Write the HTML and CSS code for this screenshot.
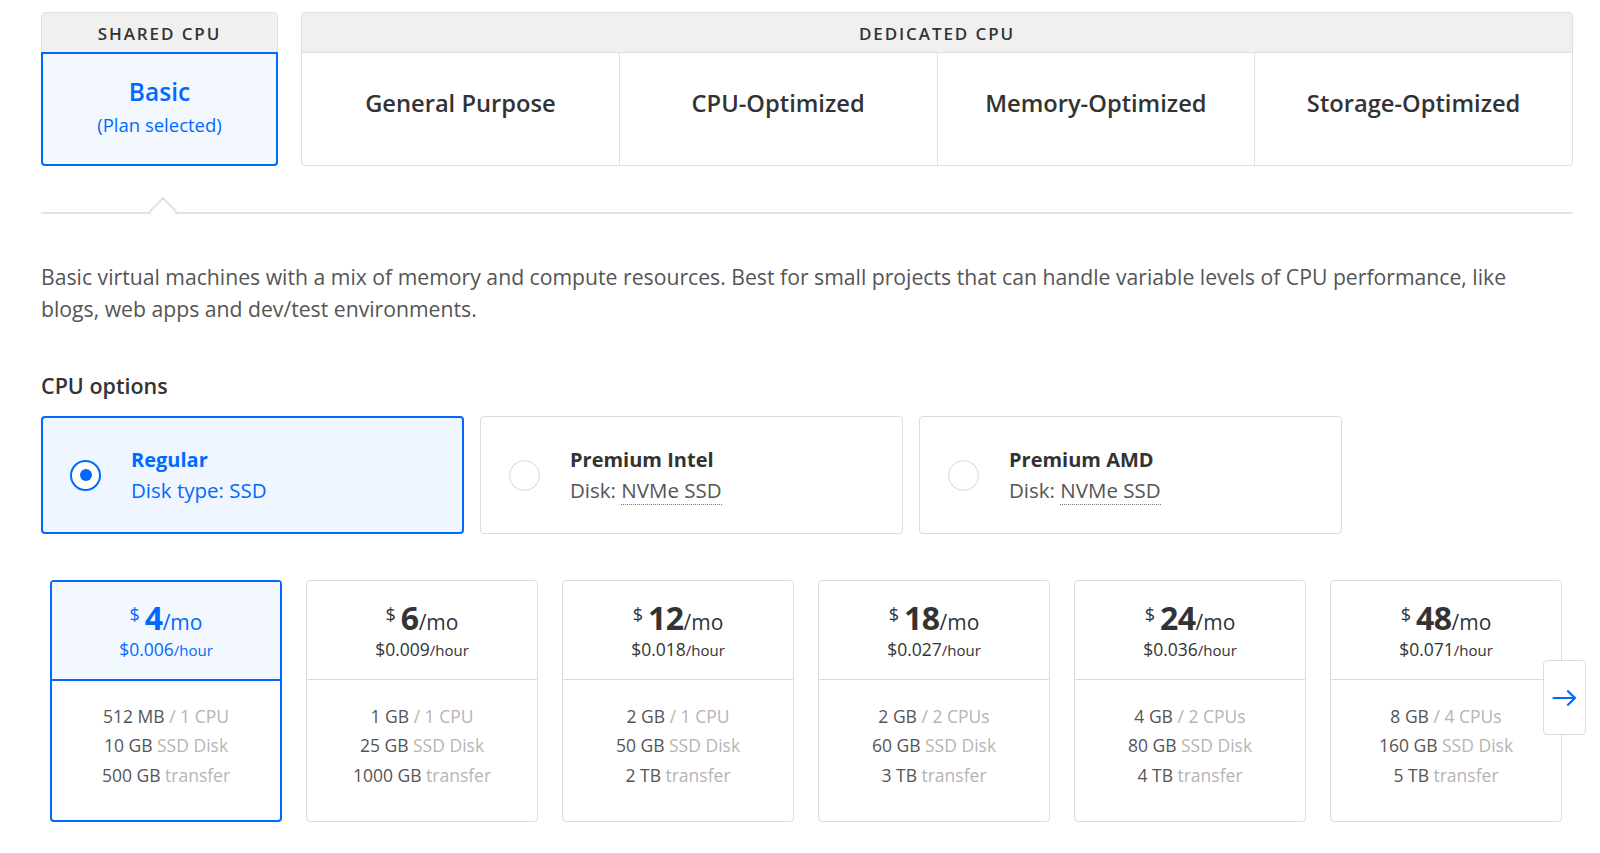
FILE: index.html
```html
<!DOCTYPE html>
<html>
<head>
<meta charset="utf-8">
<link rel="stylesheet" href="styles.css">
</head>
<body>
<div class="page">
  <div class="plan-row">
    <div class="group shared">
      <div class="group-head">SHARED CPU</div>
      <div class="group-body">
        <div class="plan selected">
          <div class="plan-name">Basic</div>
          <div class="plan-note">(Plan selected)</div>
        </div>
      </div>
    </div>
    <div class="group dedicated">
      <div class="group-head">DEDICATED CPU</div>
      <div class="group-body">
        <div class="plan"><div class="plan-name">General Purpose</div></div>
        <div class="plan"><div class="plan-name">CPU-Optimized</div></div>
        <div class="plan"><div class="plan-name">Memory-Optimized</div></div>
        <div class="plan"><div class="plan-name">Storage-Optimized</div></div>
      </div>
    </div>
  </div>

  <div class="divider"><span class="caret"></span></div>

  <p class="desc">Basic virtual machines with a mix of memory and compute resources. Best for small projects that can handle variable levels of CPU performance, like blogs, web apps and dev/test environments.</p>

  <h3 class="section-title">CPU options</h3>
  <div class="cpu-row">
    <div class="cpu-card active">
      <span class="radio on"></span>
      <div class="cpu-text">
        <div class="cpu-title">Regular</div>
        <div class="cpu-sub">Disk type: SSD</div>
      </div>
    </div>
    <div class="cpu-card">
      <span class="radio"></span>
      <div class="cpu-text">
        <div class="cpu-title">Premium Intel</div>
        <div class="cpu-sub">Disk: <span class="dotted">NVMe SSD</span></div>
      </div>
    </div>
    <div class="cpu-card">
      <span class="radio"></span>
      <div class="cpu-text">
        <div class="cpu-title">Premium AMD</div>
        <div class="cpu-sub">Disk: <span class="dotted">NVMe SSD</span></div>
      </div>
    </div>
  </div>

  <div class="slider">
    <div class="price-row">
      <div class="price-card active">
        <div class="price-head">
          <div class="monthly"><span class="cur">$</span><span class="amt">4</span><span class="per">/mo</span></div>
          <div class="hourly">$0.006<span class="per-h">/hour</span></div>
        </div>
        <div class="price-body">
          <div>512 MB <span class="lite">/ 1 CPU</span></div>
          <div>10 GB <span class="lite">SSD Disk</span></div>
          <div>500 GB <span class="lite">transfer</span></div>
        </div>
      </div>
      <div class="price-card">
        <div class="price-head">
          <div class="monthly"><span class="cur">$</span><span class="amt">6</span><span class="per">/mo</span></div>
          <div class="hourly">$0.009<span class="per-h">/hour</span></div>
        </div>
        <div class="price-body">
          <div>1 GB <span class="lite">/ 1 CPU</span></div>
          <div>25 GB <span class="lite">SSD Disk</span></div>
          <div>1000 GB <span class="lite">transfer</span></div>
        </div>
      </div>
      <div class="price-card">
        <div class="price-head">
          <div class="monthly"><span class="cur">$</span><span class="amt">12</span><span class="per">/mo</span></div>
          <div class="hourly">$0.018<span class="per-h">/hour</span></div>
        </div>
        <div class="price-body">
          <div>2 GB <span class="lite">/ 1 CPU</span></div>
          <div>50 GB <span class="lite">SSD Disk</span></div>
          <div>2 TB <span class="lite">transfer</span></div>
        </div>
      </div>
      <div class="price-card">
        <div class="price-head">
          <div class="monthly"><span class="cur">$</span><span class="amt">18</span><span class="per">/mo</span></div>
          <div class="hourly">$0.027<span class="per-h">/hour</span></div>
        </div>
        <div class="price-body">
          <div>2 GB <span class="lite">/ 2 CPUs</span></div>
          <div>60 GB <span class="lite">SSD Disk</span></div>
          <div>3 TB <span class="lite">transfer</span></div>
        </div>
      </div>
      <div class="price-card">
        <div class="price-head">
          <div class="monthly"><span class="cur">$</span><span class="amt">24</span><span class="per">/mo</span></div>
          <div class="hourly">$0.036<span class="per-h">/hour</span></div>
        </div>
        <div class="price-body">
          <div>4 GB <span class="lite">/ 2 CPUs</span></div>
          <div>80 GB <span class="lite">SSD Disk</span></div>
          <div>4 TB <span class="lite">transfer</span></div>
        </div>
      </div>
      <div class="price-card">
        <div class="price-head">
          <div class="monthly"><span class="cur">$</span><span class="amt">48</span><span class="per">/mo</span></div>
          <div class="hourly">$0.071<span class="per-h">/hour</span></div>
        </div>
        <div class="price-body">
          <div>8 GB <span class="lite">/ 4 CPUs</span></div>
          <div>160 GB <span class="lite">SSD Disk</span></div>
          <div>5 TB <span class="lite">transfer</span></div>
        </div>
      </div>
    </div>
    <button class="next" aria-label="Next">
      <svg width="25" height="16" viewBox="0 0 25 16"><path d="M1.5 8H23M16 1.2L23 8L16 14.8" fill="none" stroke="#0069ff" stroke-width="2.2" stroke-linecap="round" stroke-linejoin="round"/></svg>
    </button>
  </div>
</div>
</body>
</html>
```

FILE: styles.css
```css
* { box-sizing: border-box; }
html, body { margin: 0; padding: 0; background: #fff; }
body {
  font-family: "Open Sans", "Noto Sans", "Liberation Sans", sans-serif;
  color: #333;
}
.page { padding: 12px 0 0 41px; width: 1600px; }

.plan-row { display: flex; gap: 23px; width: 1532px; }
.group {
  border: 1px solid #dfdfdf;
  border-radius: 4px;
  background: #fff;
}
.shared { width: 237px; }
.dedicated { flex: 1; }
.group-head {
  height: 40px;
  background: #f0f0f0;
  border-bottom: 1px solid #dfdfdf;
  border-radius: 3px 3px 0 0;
  display: flex; align-items: center; justify-content: center;
  font-size: 17px; font-weight: 600; letter-spacing: 1.9px; color: #333;
  padding-top: 1px;
}
.group-body { display: flex; height: 112px; }
.plan {
  flex: 1;
  display: flex; flex-direction: column; align-items: center; justify-content: center;
  border-right: 1px solid #dfdfdf;
  padding-bottom: 12px;
}
.plan:last-child { border-right: 0; }
.plan-name { font-size: 23.7px; font-weight: 600; color: #333; line-height: 30px; }
.plan.selected {
  background: #f3f8ff;
  border: 2px solid #0069ff;
  margin: -1px -1px -1px -1px;
  border-radius: 0 0 4px 4px;
  padding-bottom: 4px;
}
.plan.selected .plan-name { color: #0069ff; font-size: 24.5px; }
.plan-note { font-size: 18.5px; color: #0069ff; line-height: 24px; margin-top: 6px; }

.divider {
  position: relative;
  margin-top: 46px;
  height: 2px;
  background: #e2e2e2;
  width: 1532px;
}
.caret {
  position: absolute;
  left: 112px; top: -11px;
  width: 20px; height: 20px;
  background: #fff;
  border-top: 2px solid #e2e2e2;
  border-left: 2px solid #e2e2e2;
  transform: rotate(45deg);
}

.desc {
  margin: 47px 0 0;
  font-size: 21.2px; line-height: 31.5px; color: #555;
  max-width: 1515px;
}
.section-title {
  margin: 48px 0 0;
  font-size: 21.5px; line-height: 28px; font-weight: 600; color: #333;
}

.cpu-row { display: flex; gap: 16px; margin-top: 16px; }
.cpu-card {
  width: 423px; height: 118px;
  border: 1px solid #dcdcdc; border-radius: 4px;
  display: flex; align-items: center;
  padding-left: 28px;
}
.cpu-card.active { background: #f0f6ff; border: 2px solid #0069ff; padding-left: 27px; }
.radio {
  width: 31px; height: 31px; border-radius: 50%;
  border: 1px solid #d8d8d8; background: #fff;
  flex: none; margin-right: 30px;
  display: flex; align-items: center; justify-content: center;
}
.radio.on { border: 2px solid #0069ff; }
.radio.on::after {
  content: ""; width: 12px; height: 12px; border-radius: 50%; background: #0069ff;
}
.cpu-title { font-size: 20px; font-weight: 700; color: #333; line-height: 28px; }
.cpu-sub { font-size: 20.5px; color: #555; line-height: 28px; margin-top: 2px; }
.cpu-card.active .cpu-title, .cpu-card.active .cpu-sub { color: #0069ff; }
.dotted { border-bottom: 1px dotted #777; }

.slider { position: relative; margin-top: 46px; padding-left: 9px; }
.price-row { display: flex; gap: 24px; }
.price-card {
  width: 232px; height: 242px;
  border: 1px solid #dcdcdc; border-radius: 4px;
  background: #fff;
  text-align: center;
}
.price-head {
  height: 99px;
  border-bottom: 1px solid #dcdcdc;
  padding-top: 17px;
}
.monthly { line-height: 32px; color: #333; white-space: nowrap; }
.cur { font-size: 18px; vertical-align: 9px; margin-right: 5px; }
.amt { font-size: 32px; font-weight: 700; letter-spacing: -0.5px; }
.per { font-size: 21px; }
.hourly { font-size: 17.5px; line-height: 24px; color: #333; margin-top: -3px; }
.per-h { font-size: 15px; }
.price-body {
  padding-top: 22px;
  font-size: 17.5px; line-height: 29.3px; color: #555;
}
.lite { color: #b5b5b5; }
.price-card.active { border: 2px solid #0069ff; }
.price-card.active .price-head { background: #f3f8ff; border-bottom: 2px solid #0069ff; height: 99px; padding-top: 16px; }
.price-card.active .price-body { padding-top: 21px; }
.price-card.active .monthly, .price-card.active .hourly { color: #0069ff; }

.next {
  position: absolute;
  left: 1502px; top: 80px;
  width: 43px; height: 75px;
  background: #fff;
  border: 1px solid #dcdcdc; border-radius: 4px;
  display: flex; align-items: center; justify-content: center;
  padding: 0; cursor: pointer;
}
```
